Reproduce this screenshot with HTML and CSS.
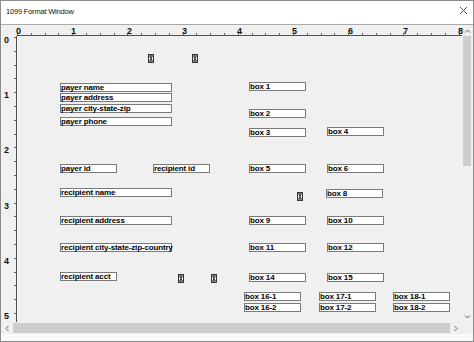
FILE: index.html
```html
<!DOCTYPE html>
<html lang="en">
<head>
    <meta charset="UTF-8">
    <meta name="viewport" content="width=device-width, initial-scale=1.0">
    <title>1099 Format Window</title>
    <link rel="stylesheet" href="styles.css">
</head>
<body>
  <div id="window">
    <div id="titlebar">
      <span id="title">1099 Format Window</span>
      <svg id="close" width="9" height="9" viewBox="0 0 9 9"><path d="M1 1L8 8M8 1L1 8" stroke="#555" stroke-width="1"/></svg>
    </div>
    <div id="client">
      <div id="main">
        <div id="view">
          <div id="corner"></div>
          <div id="topruler">
            <span class="num" style="left:-1px">0</span>
            <span class="num" style="left:54px">1</span>
            <span class="num" style="left:110px">2</span>
            <span class="num" style="left:165px">3</span>
            <span class="num" style="left:220px">4</span>
            <span class="num" style="left:275px">5</span>
            <span class="num" style="left:331px">6</span>
            <span class="num" style="left:386px">7</span>
            <span class="num" style="left:441px">8</span>
          </div>
          <div id="leftruler">
            <span class="num" style="top:0px">0</span>
            <span class="num" style="top:55px">1</span>
            <span class="num" style="top:110px">2</span>
            <span class="num" style="top:166px">3</span>
            <span class="num" style="top:221px">4</span>
            <span class="num" style="top:276px">5</span>
          </div>
          <div id="canvas">
            <div class="fld wide" style="left:43px;top:47px">payer name</div>
            <div class="fld wide" style="left:43px;top:57px">payer address</div>
            <div class="fld wide" style="left:43px;top:68px">payer city-state-zip</div>
            <div class="fld wide" style="left:43px;top:81px">payer phone</div>
            <div class="fld" style="left:43px;top:128px">payer id</div>
            <div class="fld" style="left:136px;top:128px">recipient id</div>
            <div class="fld wide" style="left:43px;top:152px">recipient name</div>
            <div class="fld wide" style="left:43px;top:180px">recipient address</div>
            <div class="fld wide" style="left:43px;top:207px">recipient city-state-zip-country</div>
            <div class="fld" style="left:43px;top:236px">recipient acct</div>

            <div class="fld" style="left:232px;top:46px">box 1</div>
            <div class="fld" style="left:232px;top:73px">box 2</div>
            <div class="fld" style="left:232px;top:92px">box 3</div>
            <div class="fld" style="left:310px;top:91px">box 4</div>
            <div class="fld" style="left:232px;top:128px">box 5</div>
            <div class="fld" style="left:310px;top:128px">box 6</div>
            <div class="fld" style="left:309px;top:153px">box 8</div>
            <div class="fld" style="left:232px;top:180px">box 9</div>
            <div class="fld" style="left:310px;top:180px">box 10</div>
            <div class="fld" style="left:232px;top:207px">box 11</div>
            <div class="fld" style="left:310px;top:207px">box 12</div>
            <div class="fld" style="left:232px;top:237px">box 14</div>
            <div class="fld" style="left:310px;top:237px">box 15</div>
            <div class="fld" style="left:227px;top:256px">box 16-1</div>
            <div class="fld" style="left:227px;top:267px">box 16-2</div>
            <div class="fld" style="left:302px;top:256px">box 17-1</div>
            <div class="fld" style="left:302px;top:267px">box 17-2</div>
            <div class="fld" style="left:376px;top:256px">box 18-1</div>
            <div class="fld" style="left:376px;top:267px">box 18-2</div>

            <svg class="glass" style="left:131px;top:18px" width="6" height="9" viewBox="0 0 6 9"><rect x="0.5" y="0.5" width="5" height="8" fill="#f2f2f2" stroke="#222" stroke-width="0.9"/><path d="M1.5 1.8H4.5L3 4.5L4.5 7.2H1.5L3 4.5Z" fill="#c8c8c8" stroke="#222" stroke-width="0.9"/></svg>
            <svg class="glass" style="left:175px;top:18px" width="6" height="9" viewBox="0 0 6 9"><rect x="0.5" y="0.5" width="5" height="8" fill="#f2f2f2" stroke="#222" stroke-width="0.9"/><path d="M1.5 1.8H4.5L3 4.5L4.5 7.2H1.5L3 4.5Z" fill="#c8c8c8" stroke="#222" stroke-width="0.9"/></svg>
            <svg class="glass" style="left:280px;top:156px" width="6" height="9" viewBox="0 0 6 9"><rect x="0.5" y="0.5" width="5" height="8" fill="#f2f2f2" stroke="#222" stroke-width="0.9"/><path d="M1.5 1.8H4.5L3 4.5L4.5 7.2H1.5L3 4.5Z" fill="#c8c8c8" stroke="#222" stroke-width="0.9"/></svg>
            <svg class="glass" style="left:161px;top:238px" width="6" height="9" viewBox="0 0 6 9"><rect x="0.5" y="0.5" width="5" height="8" fill="#f2f2f2" stroke="#222" stroke-width="0.9"/><path d="M1.5 1.8H4.5L3 4.5L4.5 7.2H1.5L3 4.5Z" fill="#c8c8c8" stroke="#222" stroke-width="0.9"/></svg>
            <svg class="glass" style="left:194px;top:238px" width="6" height="9" viewBox="0 0 6 9"><rect x="0.5" y="0.5" width="5" height="8" fill="#f2f2f2" stroke="#222" stroke-width="0.9"/><path d="M1.5 1.8H4.5L3 4.5L4.5 7.2H1.5L3 4.5Z" fill="#c8c8c8" stroke="#222" stroke-width="0.9"/></svg>
          </div>
        </div>
        <div id="vscroll">
          <div class="arrow"><svg width="7" height="4" viewBox="0 0 7 4"><path d="M1 3.5L3.5 1L6 3.5" fill="none" stroke="#606060"/></svg></div>
          <div class="track"><div class="thumb"></div></div>
          <div class="arrow"><svg width="7" height="4" viewBox="0 0 7 4"><path d="M1 0.5L3.5 3L6 0.5" fill="none" stroke="#606060"/></svg></div>
        </div>
      </div>
      <div id="hbar">
        <div id="hscroll">
          <div class="arrow"><svg width="4" height="7" viewBox="0 0 4 7"><path d="M3.5 1L1 3.5L3.5 6" fill="none" stroke="#606060"/></svg></div>
          <div class="thumb"></div>
          <div class="arrow"><svg width="4" height="7" viewBox="0 0 4 7"><path d="M0.5 1L3 3.5L0.5 6" fill="none" stroke="#606060"/></svg></div>
        </div>
        <div id="sizer"></div>
      </div>
    </div>
    <div id="status"></div>
  </div>
</body>
</html>
```

FILE: styles.css
```css
*
{
    box-sizing: border-box;
}
body
{
    margin: 0;
    font-family: "Liberation Sans", Arial, sans-serif;
}
#window
{
    width: 474px;
    height: 342px;
    border: 1px solid #8c8c8c;
    display: flex;
    flex-direction: column;
    background-color: #f0f0f0;
}
#titlebar
{
    height: 24px;
    background-color: #fff;
    border-bottom: 1px solid #a9a9a9;
    display: flex;
    justify-content: space-between;
    align-items: center;
    padding: 0 5px 0 5px;
}
#title
{
    font-size: 7.5px;
    letter-spacing: -0.2px;
    color: #111;
    margin-top: -2px;
}
#close
{
    margin-top: -4px;
}
#client
{
    flex: 1;
    display: flex;
    flex-direction: column;
}
#main
{
    height: 297px;
    display: flex;
}
#view
{
    flex: 1;
    display: grid;
    grid-template-columns: 16px 1fr;
    grid-template-rows: 11px 1fr;
}
#topruler
{
    position: relative;
    border-bottom: 1px solid #505050;
    background-image: repeating-linear-gradient(to right, #666 0 1px, transparent 1px 13.8px);
    background-size: 100% 2px;
    background-position: 0 bottom;
    background-repeat: no-repeat;
}
#leftruler
{
    position: relative;
    border-right: 1px solid #505050;
    background-image: repeating-linear-gradient(to bottom, #666 0 1px, transparent 1px 13.8px);
    background-size: 2px 100%;
    background-position: right 0 top 1px;
    background-repeat: no-repeat;
}
.num
{
    position: absolute;
    font-size: 9px;
    font-weight: bold;
    line-height: 9px;
    color: #111;
}
#topruler .num
{
    top: 2px;
}
#leftruler .num
{
    left: 3px;
}
#canvas
{
    position: relative;
    overflow: hidden;
}
.fld
{
    position: absolute;
    width: 57px;
    height: 9px;
    background-color: #fff;
    border: 1px solid #7a7a7a;
    font-size: 8px;
    font-weight: bold;
    letter-spacing: -0.15px;
    line-height: 8px;
    white-space: nowrap;
    color: #000;
}
.wide
{
    width: 112px;
}
.glass
{
    position: absolute;
}
#vscroll
{
    width: 11px;
    display: flex;
    flex-direction: column;
}
.arrow
{
    display: flex;
    align-items: center;
    justify-content: center;
}
#vscroll .arrow
{
    height: 11px;
}
#vscroll .track
{
    flex: 1;
    padding: 0 2px 0 1px;
}
#vscroll .thumb
{
    height: 130px;
    background-color: #cdcdcd;
}
#hbar
{
    height: 12px;
    display: flex;
}
#hscroll
{
    flex: 1;
    display: flex;
}
#hscroll .arrow
{
    width: 12px;
}
#hscroll .thumb
{
    flex: 1;
    margin: 1px 0;
    background-color: #cdcdcd;
}
#sizer
{
    width: 11px;
}
#status
{
    height: 7px;
    background-color: #fafafa;
}
```
